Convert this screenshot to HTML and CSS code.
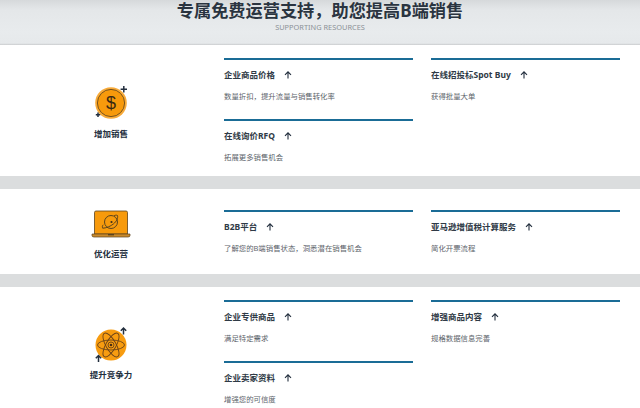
FILE: index.html
```html
<!DOCTYPE html>
<html lang="zh">
<head>
<meta charset="utf-8">
<title>专属免费运营支持</title>
<link rel="stylesheet" href="styles.css">
</head>
<body>
<svg class="defs" width="0" height="0" aria-hidden="true">
  <symbol id="up" viewBox="0 0 8 8"><path d="M4 7.600V1M1 3.900 4 .8l3 3.100" fill="none" stroke="#232f3e" stroke-width="1.100"/></symbol>
</svg>
<header class="hero">
  <h1>专属免费运营支持，助您提高B端销售</h1>
  <p>SUPPORTING RESOURCES</p>
</header>
<section class="panel panel-a">
  <div class="side">
    <svg class="icon" viewBox="0 0 40 40" aria-hidden="true">
      <circle cx="20" cy="20" r="15.800" fill="#f8ab3a"/>
      <circle cx="20" cy="20" r="13.600" fill="#f79a0c" stroke="#7a541c" stroke-width="1"/>
      <text x="20" y="26" class="dollar" text-anchor="middle">$</text>
      <path d="M32.800 3v6.400M29.600 6.200h6.400M7 29.500v4.400M4.800 31.700h4.400" stroke="#232f3e" stroke-width="1.500" fill="none"/>
    </svg>
    <h2>增加销售</h2>
  </div>
  <div class="cards">
    <article class="card"><h3>企业商品价格<svg class="up"><use href="#up"/></svg></h3><p>数量折扣，提升流量与销售转化率</p></article>
    <article class="card"><h3>在线招投标Spot Buy<svg class="up"><use href="#up"/></svg></h3><p>获得批量大单</p></article>
    <article class="card"><h3>在线询价RFQ<svg class="up"><use href="#up"/></svg></h3><p>拓展更多销售机会</p></article>
  </div>
</section>
<section class="panel panel-b">
  <div class="side">
    <svg class="icon icon-wide" viewBox="0 0 40 30" aria-hidden="true">
      <path d="M3.500 2.500q0-1.500 1.500-1.500h30q1.500 0 1.500 1.500V24h-33z" fill="#f79a0c" stroke="#5d4420" stroke-width=".8"/>
      <path d="M1 24h38v1.500q0 1.500-2 1.500H3q-2 0-2-1.500z" fill="#c98a2c" stroke="#5d4420" stroke-width=".7"/>
      <path d="M17 24.300h6v1h-6z" fill="#3c2f1e"/>
      <circle cx="20" cy="12" r="6.500" fill="none" stroke="#4a3a20" stroke-width=".9"/>
      <path d="M11.500 18c3 .5 9-2 12-5s3.500-6 3-7.500c-1-.6-2.500-.3-3.500.3M12 18.300c-1-1-.8-2.200.2-3.500" fill="none" stroke="#4a3a20" stroke-width=".9"/>
      <circle cx="20.500" cy="12" r="1.100" fill="#3c2f1e"/>
    </svg>
    <h2>优化运营</h2>
  </div>
  <div class="cards">
    <article class="card"><h3>B2B平台<svg class="up"><use href="#up"/></svg></h3><p>了解您的B端销售状态，洞悉潜在销售机会</p></article>
    <article class="card"><h3>亚马逊增值税计算服务<svg class="up"><use href="#up"/></svg></h3><p>简化开票流程</p></article>
  </div>
</section>
<section class="panel panel-c">
  <div class="side">
    <svg class="icon" viewBox="0 0 40 40" aria-hidden="true">
      <circle cx="20" cy="20" r="15.500" fill="#f79c10"/>
      <g fill="none" stroke="#6a431a" stroke-width=".9">
        <ellipse cx="20" cy="20" rx="13.500" ry="5"/>
        <ellipse cx="20" cy="20" rx="13.500" ry="5" transform="rotate(60 20 20)"/>
        <ellipse cx="20" cy="20" rx="13.500" ry="5" transform="rotate(120 20 20)"/>
        <circle cx="20" cy="20" r="3"/>
      </g>
      <circle cx="20" cy="20" r="1.300" fill="#4a2d10"/>
      <path d="M32.500 9.500V3M29.800 5.800l2.700-2.800 2.700 2.800M7.500 37v-6.500M4.800 33.300l2.700-2.800 2.700 2.800" fill="none" stroke="#232f3e" stroke-width="1.500"/>
    </svg>
    <h2>提升竞争力</h2>
  </div>
  <div class="cards">
    <article class="card"><h3>企业专供商品<svg class="up"><use href="#up"/></svg></h3><p>满足特定需求</p></article>
    <article class="card"><h3>增强商品内容<svg class="up"><use href="#up"/></svg></h3><p>规格数据信息完善</p></article>
    <article class="card"><h3>企业卖家资料<svg class="up"><use href="#up"/></svg></h3><p>增强您的可信度</p></article>
  </div>
</section>
</body>
</html>
```
FILE: styles.css
```css
* { box-sizing: border-box; }
html, body { margin: 0; height: 408px; overflow: hidden; }
body {
  background: #fff;
  color: #232f3e;
  font-family: "Noto Sans", "Noto Sans CJK SC", sans-serif;
}
.defs { position: absolute; }
h1, h2, h3, p { margin: 0; }
.hero {
  height: 45px;
  text-align: center;
  background: linear-gradient(#d6d9db 0, #e4e7e9 22%, #e8ebed 70%, #e6e9eb 96%, #c9cbcd 100%);
}
.hero h1 {
  font-size: 17.2px;
  line-height: 22px;
  font-weight: 700;
  color: #2a3440;
}
.hero p {
  font-size: 7.4px;
  line-height: 10px;
  color: #8b9197;
}
.panel {
  display: grid;
  grid-template-columns: 224px 397px;
  background: #fff;
  padding-top: 13px;
  border-bottom: 13px solid #dbddde;
}
.panel-a { height: 144px; }
.panel-b { height: 98px; padding-top: 21px; }
.panel-c { height: 134px; border-bottom: 0; }
.side {
  display: flex;
  flex-direction: column;
  align-items: center;
  justify-content: center;
  width: 222px;
  padding-bottom: 16px;
}
.panel-b .side { padding-bottom: 14px; }
.panel-c .side { padding-bottom: 17px; }
.icon { width: 40px; height: 40px; display: block; }
.icon-wide { height: 30px; margin-bottom: 4px; }
.side h2 {
  font-size: 8.5px;
  line-height: 12px;
  font-weight: 700;
  margin-top: 5px;
}
.panel-b .side h2,
.panel-c .side h2 { margin-top: 4px; }
.cards {
  display: grid;
  grid-template-columns: 189px 189px;
  grid-auto-rows: 61px;
  column-gap: 18px;
}
.card {
  border-top: 2px solid #1a6c96;
  padding-top: 9px;
}
.card h3 {
  display: flex;
  align-items: center;
  font-size: 8.5px;
  line-height: 12px;
  font-weight: 700;
  color: #2f3a46;
}
.up { width: 8px; height: 8px; margin-left: 9px; }
.card p {
  font-size: 7.4px;
  line-height: 10px;
  margin-top: 10px;
  color: #5d646b;
}
.dollar {
  font-family: "Liberation Sans", sans-serif;
  font-size: 18px;
  fill: #3a2a12;
}
```
